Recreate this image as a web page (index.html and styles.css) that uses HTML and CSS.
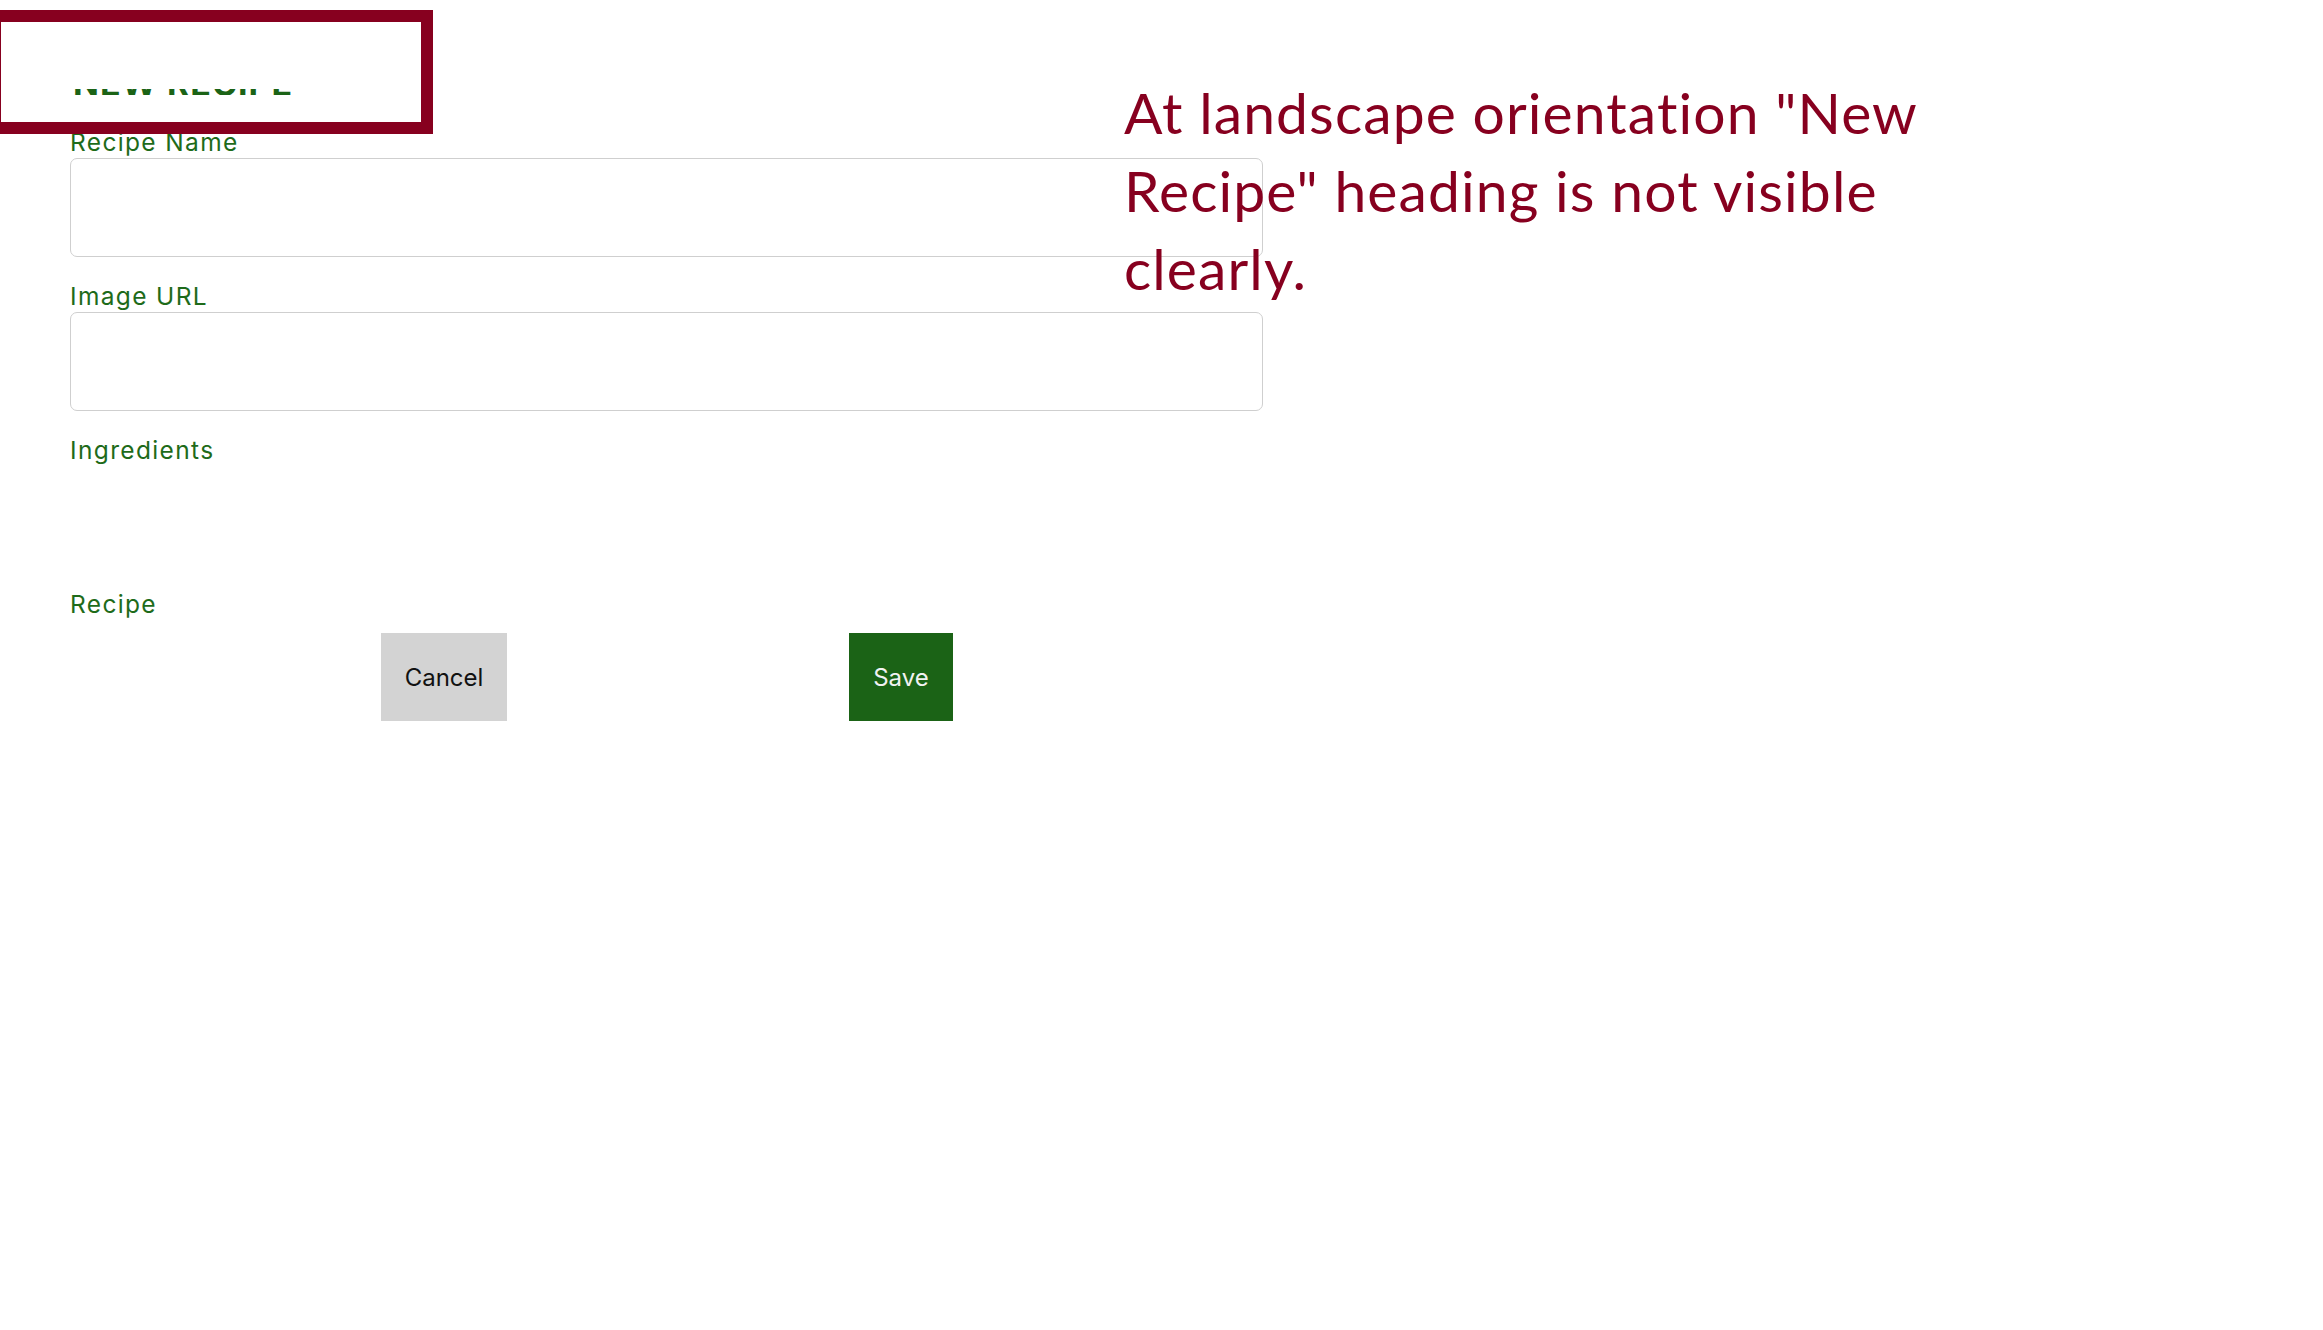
FILE: index.html
```html
<!DOCTYPE html>
<html lang="en">
<head>
<meta charset="utf-8">
<title>New Recipe</title>
<link rel="stylesheet" href="styles.css">
</head>
<body>
<div class="page">
  <div class="title-clip"><h1 class="title">New Recipe</h1></div>
  <form class="recipe-form">
    <div class="field">
      <label class="field-label">Recipe Name</label>
      <div class="input-box"></div>
    </div>
    <div class="field">
      <label class="field-label">Image URL</label>
      <div class="input-box"></div>
    </div>
    <div class="field">
      <label class="field-label">Ingredients</label>
      <div class="input-box input-box--bare"></div>
    </div>
    <div class="field field--last">
      <label class="field-label">Recipe</label>
    </div>
    <div class="actions">
      <button type="button" class="btn btn-cancel">Cancel</button>
      <button type="button" class="btn btn-save">Save</button>
    </div>
  </form>
</div>
<div class="highlight-box"></div>
<p class="annotation">At landscape orientation "New<br>Recipe" heading is not visible<br>clearly.</p>
</body>
</html>
```

FILE: styles.css
```css
html, body {
  margin: 0;
  padding: 0;
  background: #ffffff;
}

body {
  font-family: Inter, "Liberation Sans", sans-serif;
  position: relative;
  width: 2323px;
  height: 1330px;
  overflow: hidden;
}

.page {
  width: 1193px;
  padding-left: 70px;
}

.title-clip {
  margin-top: 89px;
  height: 6px;
  overflow: hidden;
  display: flex;
  align-items: flex-end;
}

.title {
  margin: 0 0 -4px 3px;
  font-size: 34px;
  line-height: 30px;
  font-weight: 700;
  text-transform: uppercase;
  letter-spacing: 1px;
  color: #1b6316;
  white-space: nowrap;
}

.recipe-form {
  margin-top: 33px;
  display: flex;
  flex-direction: column;
}

.field {
  display: flex;
  flex-direction: column;
  margin-bottom: 25px;
}

.field--last {
  margin-bottom: 13px;
}

.field-label {
  display: block;
  font-size: 24.5px;
  line-height: 28px;
  letter-spacing: 1.35px;
  color: #1e6b1a;
  margin-bottom: 2px;
}

.input-box {
  height: 99px;
  box-sizing: border-box;
  border: 1px solid #cfcfcf;
  border-radius: 7px;
  background: #ffffff;
}

.input-box--bare {
  border-color: transparent;
}

.actions {
  display: flex;
  justify-content: space-between;
  padding: 0 310px 0 311px;
}

.btn {
  height: 88px;
  border: none;
  border-radius: 0;
  font-family: Inter, "Liberation Sans", sans-serif;
  font-size: 24px;
  display: flex;
  align-items: center;
  justify-content: center;
}

.btn-cancel {
  width: 126px;
  background: #d3d3d3;
  color: #111111;
}

.btn-save {
  width: 104px;
  background: #1b6316;
  color: #f2f2f2;
}

.highlight-box {
  position: absolute;
  left: -11px;
  top: 10px;
  width: 444px;
  height: 124px;
  box-sizing: border-box;
  border: 12px solid #87001f;
}

.annotation {
  position: absolute;
  left: 1124px;
  top: 73px;
  margin: 0;
  font-family: Lato, "Open Sans", sans-serif;
  font-size: 57px;
  line-height: 78px;
  letter-spacing: 1.1px;
  color: #87001f;
}
```
